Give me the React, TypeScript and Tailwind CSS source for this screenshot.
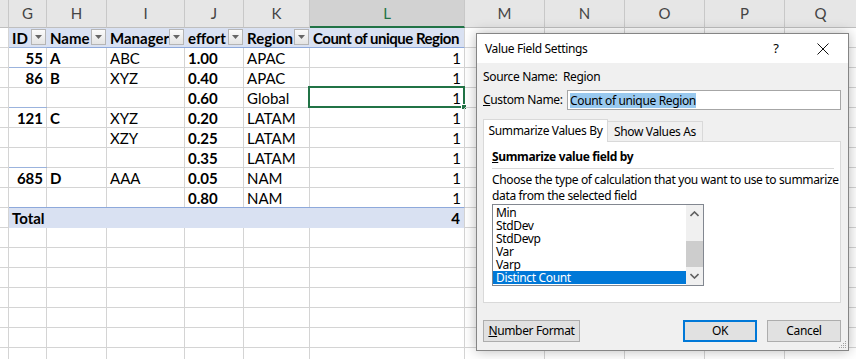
import React from "react";

const COLS = [
  { key: "F", w: 9 },
  { key: "G", w: 38 },
  { key: "H", w: 60 },
  { key: "I", w: 78 },
  { key: "J", w: 59 },
  { key: "K", w: 66 },
  { key: "L", w: 155 },
  { key: "M", w: 80 },
  { key: "N", w: 80 },
  { key: "O", w: 80 },
  { key: "P", w: 80 },
  { key: "Q", w: 80 },
];

type R = { id?: string; name?: string; mgr?: string; eff: string; reg: string; groupTop?: boolean; sel?: boolean };

const DATA: R[] = [
  { id: "55", name: "A", mgr: "ABC", eff: "1.00", reg: "APAC", groupTop: true },
  { id: "86", name: "B", mgr: "XYZ", eff: "0.40", reg: "APAC", groupTop: true },
  { eff: "0.60", reg: "Global", sel: true },
  { id: "121", name: "C", mgr: "XYZ", eff: "0.20", reg: "LATAM", groupTop: true },
  { mgr: "XZY", eff: "0.25", reg: "LATAM" },
  { eff: "0.35", reg: "LATAM" },
  { id: "685", name: "D", mgr: "AAA", eff: "0.05", reg: "NAM", groupTop: true },
  { eff: "0.80", reg: "NAM" },
];

const XL = { fontFamily: "Lato, Carlito, 'Liberation Sans', sans-serif" };
const UI = { fontFamily: "'Noto Sans', 'Open Sans', sans-serif" };

function FilterBtn() {
  return (
    <div className="absolute right-[1px] top-[1px] w-[15px] h-[16px] border border-[#b5b5b5] bg-gradient-to-b from-[#fbfbfb] to-[#e4e4e4] flex items-center justify-center">
      <svg width="7" height="4" viewBox="0 0 7 4">
        <path d="M0 0 H7 L3.5 4 Z" fill="#666" />
      </svg>
    </div>
  );
}

function Cell({ w, children, className = "", last = false }: { w: number; children?: React.ReactNode; className?: string; last?: boolean }) {
  return (
    <div
      className={`relative shrink-0 h-full border-b border-[#d4d4d4] whitespace-nowrap ${last ? "grow" : "border-r"} ${className}`}
      style={{ width: last ? undefined : w }}
    >
      {children}
    </div>
  );
}

function HeaderRow() {
  return (
    <div className="flex h-[28px] bg-[#e6e6e6]">
      {COLS.map((c, i) => {
        const selected = c.key === "L";
        return (
          <div
            key={c.key}
            className={`shrink-0 h-full flex items-center justify-center text-[15px] ${
              selected ? "bg-[#d2d2d2] text-[#217346] border-b-2 border-b-[#217346]" : "text-[#444] border-b border-b-[#bfbfbf]"
            } ${i === COLS.length - 1 ? "grow" : "border-r border-r-[#c8c8c8]"}`}
            style={{ width: i === COLS.length - 1 ? undefined : c.w }}
          >
            {c.key === "F" ? "" : c.key}
          </div>
        );
      })}
    </div>
  );
}

function PivotHeader() {
  const labels: Record<string, string> = { G: "ID", H: "Name", I: "Manager", J: "effort", K: "Region", L: "Count of unique Region" };
  return (
    <div className="flex h-[20px]">
      {COLS.map((c, i) => {
        const inPivot = "GHIJKL".includes(c.key);
        if (inPivot) {
          return (
            <div
              key={c.key}
              className={`relative shrink-0 h-full bg-[#d9e1f2] border-b border-b-[#8ea9db] font-bold text-[15px] text-black flex items-center pl-[3px] whitespace-nowrap ${c.key === "L" ? "border-r border-r-[#d4d4d4] tracking-[-0.5px]" : ""}`}
              style={{ width: c.w }}
            >
              <span className="pt-[1px]">{labels[c.key]}</span>
              {c.key !== "L" && <FilterBtn />}
            </div>
          );
        }
        return <Cell key={c.key} w={c.w} last={i === COLS.length - 1} />;
      })}
    </div>
  );
}

function DataRow({ r }: { r: R }) {
  return (
    <div className="flex h-[20px] text-[15px] text-black">
      <Cell w={9} />
      <div className={`relative shrink-0 h-full border-r border-b border-[#d4d4d4] flex items-center justify-end pr-[3px] font-bold`} style={{ width: 38 }}>
        {r.groupTop && <div className="absolute left-0 right-[-1px] top-[-1px] h-[1px] bg-[#9bb3dd]" />}
        <span className="pt-[1px]">{r.id}</span>
      </div>
      <Cell w={60} className="flex items-center pl-[3px] font-bold">
        <span className="pt-[1px]">{r.name}</span>
      </Cell>
      <Cell w={78} className="flex items-center pl-[3px]">
        <span className="pt-[1px]">{r.mgr}</span>
      </Cell>
      <Cell w={59} className="flex items-center pl-[3px] font-bold">
        <span className="pt-[1px]">{r.eff}</span>
      </Cell>
      <Cell w={66} className="flex items-center pl-[3px]">
        <span className="pt-[1px]">{r.reg}</span>
      </Cell>
      <Cell w={155} className="flex items-center justify-end pr-[3px]">
        <span className="pt-[1px]">1</span>
        {r.sel && (
          <>
            <div className="absolute left-[-2px] top-[-2px] right-[-1px] bottom-[-1px] border-2 border-[#217346]" />
            <div className="absolute right-[-3px] bottom-[-3px] w-[6px] h-[6px] bg-[#217346] border border-white" />
          </>
        )}
      </Cell>
      {COLS.slice(7).map((c, i) => (
        <Cell key={c.key} w={c.w} last={i === 4} />
      ))}
    </div>
  );
}

function TotalRow() {
  return (
    <div className="flex h-[20px] text-[15px] font-bold text-black">
      <Cell w={9} />
      <div
        className="relative shrink-0 bg-[#d9e1f2] border-t border-t-[#8ea9db] mt-[-1px] h-[21px] flex items-center justify-between pl-[3px] pr-[4px] border-r border-r-[#d4d4d4]"
        style={{ width: 456 }}
      >
        <span className="pt-[1px]">Total</span>
        <span className="pt-[1px]">4</span>
      </div>
      {COLS.slice(7).map((c, i) => (
        <Cell key={c.key} w={c.w} last={i === 4} />
      ))}
    </div>
  );
}

function EmptyRow() {
  return (
    <div className="flex h-[20px]">
      {COLS.map((c, i) => (
        <Cell key={c.key} w={c.w} last={i === COLS.length - 1} />
      ))}
    </div>
  );
}

function Dialog() {
  return (
    <div
      className="absolute left-[476px] top-[33px] w-[373px] h-[318px] bg-[#f0f0f0] border border-[#858585] shadow-[0_0_12px_rgba(0,0,0,0.28)] text-[12px] tracking-[-0.35px] text-black flex flex-col whitespace-nowrap"
      style={UI}
    >
      <div className="h-[29px] bg-white flex items-center pl-[8px] shrink-0">
        <span className="grow">Value Field Settings</span>
        <span className="w-[46px] text-center text-[13px] mr-[1px]">?</span>
        <span className="w-[46px] flex justify-center mr-[2px]">
          <svg width="12" height="12" viewBox="0 0 12 12">
            <path d="M0.5 0.5 L11.5 11.5 M11.5 0.5 L0.5 11.5" stroke="#111" strokeWidth="1" />
          </svg>
        </span>
      </div>
      <div className="flex flex-col px-[6px] grow">
        <div className="flex items-center mt-[6px] h-[16px]">
          <span className="w-[80px]">Source Name:</span>
          <span>Region</span>
        </div>
        <div className="flex items-center mt-[5px] h-[20px]">
          <span className="w-[84px]">
            <span className="underline">C</span>ustom Name:
          </span>
          <div className="grow h-[20px] bg-white border border-[#a6a6a6] flex items-center pl-[2px] mr-[1px]">
            <span className="bg-[#99c9ef] leading-[15px]">Count of unique Region</span>
          </div>
        </div>
        <div className="flex items-end mt-[8px] h-[23px]">
          <div className="h-[23px] w-[125px] bg-white border border-[#d9d9d9] border-b-0 flex items-center justify-center relative z-10 mb-[-1px]">
            Summarize Values By
          </div>
          <div className="h-[20px] w-[95px] bg-[#f0f0f0] border border-[#d9d9d9] border-b-0 border-l-0 flex items-center justify-center">
            Show Values As
          </div>
        </div>
        <div className="h-[162px] w-[358px] bg-white border border-[#d9d9d9] flex flex-col px-[8px]">
          <div className="mt-[7px] font-bold h-[16px] leading-[16px]">
            <span className="underline">S</span>ummarize value field by
          </div>
          <div className="h-[1px] bg-[#d9d9d9] mt-[3px] mr-[-2px]" />
          <div className="mt-[3px] leading-[16px]">Choose the type of calculation that you want to use to summarize</div>
          <div className="leading-[16px]">data from the selected field</div>
          <div className="mt-[0px] w-[212px] h-[82px] border border-[#828790] flex">
            <div className="grow flex flex-col pt-[1px] leading-[13px]">
              <div className="pl-[3px] h-[13px]">Min</div>
              <div className="pl-[3px] h-[13px]">StdDev</div>
              <div className="pl-[3px] h-[13px]">StdDevp</div>
              <div className="pl-[3px] h-[13px]">Var</div>
              <div className="pl-[3px] h-[13px]">Varp</div>
              <div className="pl-[3px] h-[13px] bg-[#0078d7] text-white">Distinct Count</div>
            </div>
            <div className="w-[17px] bg-[#f0f0f0] flex flex-col">
              <div className="h-[17px] flex items-center justify-center">
                <svg width="9" height="6" viewBox="0 0 9 6">
                  <path d="M0.5 5 L4.5 1 L8.5 5" stroke="#606060" strokeWidth="1.6" fill="none" />
                </svg>
              </div>
              <div className="h-[19px]" />
              <div className="h-[26px] bg-[#cdcdcd]" />
              <div className="grow flex items-center justify-center">
                <svg width="9" height="6" viewBox="0 0 9 6">
                  <path d="M0.5 1 L4.5 5 L8.5 1" stroke="#606060" strokeWidth="1.6" fill="none" />
                </svg>
              </div>
            </div>
          </div>
        </div>
        <div className="flex items-center mt-[17px] h-[22px]">
          <div className="w-[97px] h-[22px] bg-[#e1e1e1] border border-[#adadad] flex items-center justify-center">
            <span>
              <span className="underline">N</span>umber Format
            </span>
          </div>
          <div className="grow" />
          <div className="w-[74px] h-[22px] bg-[#e1e1e1] border-2 border-[#0078d7] flex items-center justify-center">OK</div>
          <div className="w-[74px] h-[22px] bg-[#e1e1e1] border border-[#adadad] flex items-center justify-center ml-[10px] mr-[1px]">
            Cancel
          </div>
        </div>
      </div>
      <svg className="absolute right-[1px] bottom-[1px]" width="10" height="10" viewBox="0 0 10 10">
        <g fill="#a0a0a0">
          <rect x="8" y="2" width="1" height="1" />
          <rect x="6" y="4" width="1" height="1" />
          <rect x="8" y="4" width="1" height="1" />
          <rect x="4" y="6" width="1" height="1" />
          <rect x="6" y="6" width="1" height="1" />
          <rect x="8" y="6" width="1" height="1" />
          <rect x="2" y="8" width="1" height="1" />
          <rect x="4" y="8" width="1" height="1" />
          <rect x="6" y="8" width="1" height="1" />
          <rect x="8" y="8" width="1" height="1" />
        </g>
      </svg>
    </div>
  );
}

export default function App() {
  return (
    <div className="relative w-[856px] h-[359px] overflow-hidden bg-white" style={XL}>
      <HeaderRow />
      <PivotHeader />
      {DATA.map((r, i) => (
        <DataRow key={i} r={r} />
      ))}
      <TotalRow />
      {Array.from({ length: 7 }).map((_, i) => (
        <EmptyRow key={i} />
      ))}
      <Dialog />
    </div>
  );
}
